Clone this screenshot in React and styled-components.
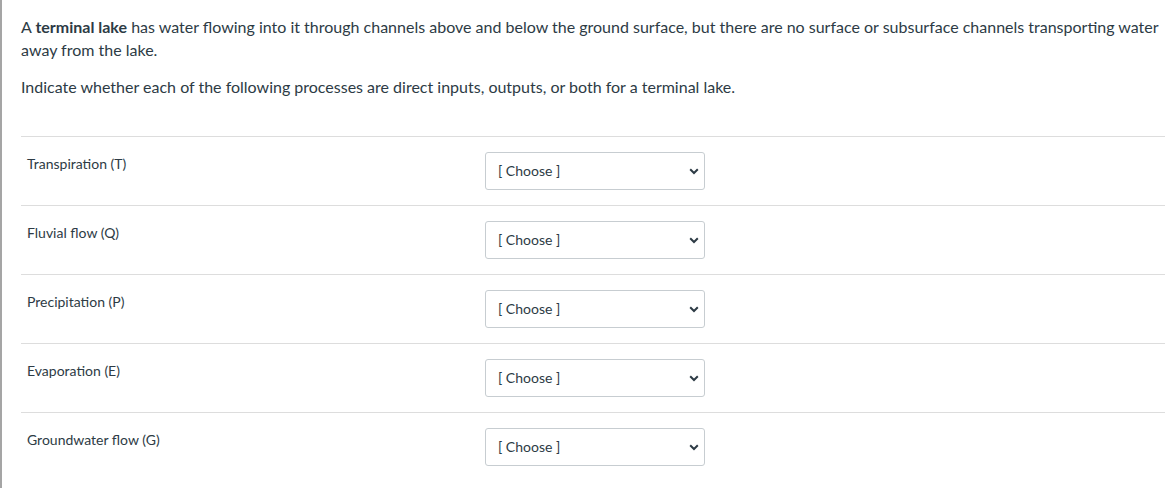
import React from "react";
import styled, { createGlobalStyle } from "styled-components";

const Global = createGlobalStyle`
  html, body { margin: 0; padding: 0; background: #fff; }
  body { font-family: Lato, "Noto Sans", sans-serif; color: #2d3b45; }
`;

const Page = styled.div`
  box-sizing: border-box;
  min-height: 488px;
  border-left: 2px solid #a5a5a5;
  padding: 15px 0 0 19px;
`;

const Para = styled.p`
  margin: 0 0 14px;
  font-size: 16px;
  line-height: 23px;
`;

const Table = styled.div`
  margin-top: 38px;
`;

const Row = styled.div`
  display: grid;
  grid-template-columns: 464px 1fr;
  height: 68px;
  border-top: 1px solid #dddddd;
`;

const Label = styled.div`
  padding: 18px 0 0 6px;
  font-size: 14px;
  line-height: 17px;
`;

const SelectWrap = styled.div`
  position: relative;
  width: 220px;
  height: 38px;
  margin-top: 15px;
`;

const Select = styled.select`
  appearance: none;
  box-sizing: border-box;
  width: 100%;
  height: 100%;
  padding: 0 24px 2px 12px;
  border: 1px solid #c7cdd1;
  border-radius: 3px;
  background: #fff;
  font-family: Lato, "Noto Sans", sans-serif;
  font-size: 14px;
  color: #2d3b45;
`;

const Chevron = styled.svg`
  position: absolute;
  right: 6px;
  top: 16px;
  pointer-events: none;
`;

const items = [
  "Transpiration (T)",
  "Fluvial flow (Q)",
  "Precipitation (P)",
  "Evaporation (E)",
  "Groundwater flow (G)",
];

export default function App() {
  return (
    <>
      <Global />
      <Page>
        <Para>
          A <b>terminal lake</b> has water flowing into it through channels above and below the ground surface, but there are no surface or subsurface channels transporting water away from the lake.
        </Para>
        <Para>
          Indicate whether each of the following processes are direct inputs, outputs, or both for a terminal lake.
        </Para>
        <Table>
          {items.map((t) => (
            <Row key={t}>
              <Label>{t}</Label>
              <SelectWrap>
                <Select defaultValue="">
                  <option value="">[ Choose ]</option>
                  <option>Input</option>
                  <option>Output</option>
                  <option>Both</option>
                </Select>
                <Chevron width="10" height="7" viewBox="0 0 10 7">
                  <path d="M1.2 1.3 L5 5 L8.8 1.3" fill="none" stroke="#2d3b45" strokeWidth="2" />
                </Chevron>
              </SelectWrap>
            </Row>
          ))}
        </Table>
      </Page>
    </>
  );
}
